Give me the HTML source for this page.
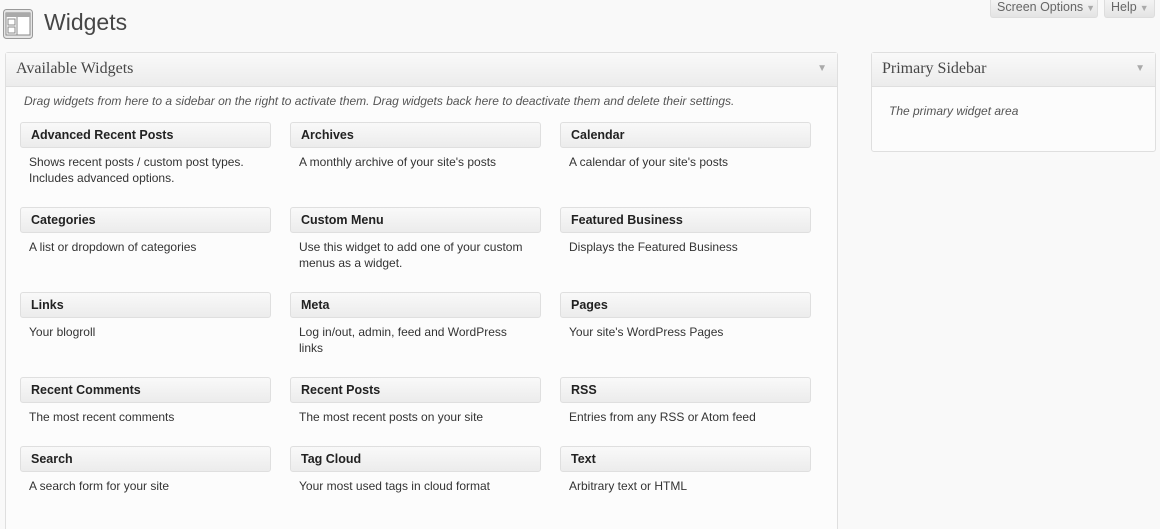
<!DOCTYPE html>
<html><head><style>
html,body{margin:0;width:1160px;height:529px;overflow:hidden}
body{background:#f9f9f9;font-family:"Liberation Sans",sans-serif;color:#333;position:relative}
.abs{position:absolute}
.btn{position:absolute;top:-1px;height:19px;border:1px solid #ddd;border-top:none;border-radius:0 0 3px 3px;background:linear-gradient(#f4f4f4,#e4e4e4);font-size:12.5px;color:#666;line-height:16px;padding:0 6px;box-sizing:border-box;white-space:nowrap}
.btn span{color:#aaa;font-size:9px;margin-left:3px}
.panel{position:absolute;border:1px solid #dfdfdf;border-radius:3px;background:#fcfcfc;box-sizing:border-box}
.ph{height:33px;border-bottom:1px solid #dfdfdf;background:linear-gradient(#f9f9f9,#ececec);font-family:"Liberation Serif",serif;font-size:16px;line-height:32px;padding-left:10px;color:#464646;position:relative}
.ph span{position:absolute;right:10px;top:0;font-family:"Liberation Sans";font-size:10px;color:#aaa}
.w{position:absolute;width:251px}
.wt{height:26px;border:1px solid #dfdfdf;border-radius:3px;background:linear-gradient(#f9f9f9,#ececec);box-sizing:border-box;font-weight:bold;font-size:12.5px;line-height:25px;padding-left:10px;color:#222}
.wd{font-size:12px;line-height:16px;padding:6px 0 0 9px;color:#333}
</style></head><body>
<svg class="abs" style="left:3px;top:9px" width="30" height="30" viewBox="0 0 30 30"><rect x="0.5" y="0.5" width="29" height="29" rx="3" fill="#e6e6e6" stroke="#999"/><rect x="3" y="4" width="24" height="22" fill="#fff" stroke="#888"/><rect x="3" y="4" width="24" height="4" fill="#aaa"/><rect x="5" y="10" width="7" height="6" fill="#fff" stroke="#888"/><rect x="5" y="18" width="7" height="6" fill="#fff" stroke="#888"/><line x1="14" y1="8" x2="14" y2="26" stroke="#888"/></svg>
<div class="abs" style="left:44px;top:9px;font-size:23px;color:#464646">Widgets</div>
<div class="btn" style="left:990px;width:108px">Screen Options<span>▼</span></div>
<div class="btn" style="left:1104px;width:51px">Help<span>▼</span></div>
<div class="panel" style="left:5px;top:52px;width:833px;height:500px">
<div class="ph">Available Widgets<span>▼</span></div>
<div class="abs" style="left:18px;top:41px;font-size:12px;font-style:italic;color:#555;white-space:nowrap">Drag widgets from here to a sidebar on the right to activate them. Drag widgets back here to deactivate them and delete their settings.</div>
</div>
<div class="panel" style="left:871px;top:52px;width:285px;height:100px">
<div class="ph">Primary Sidebar<span>▼</span></div>
<div class="abs" style="left:17px;top:51px;font-size:12px;font-style:italic;color:#555">The primary widget area</div>
</div>
<div class="w" style="left:20px;top:122px"><div class="wt">Advanced Recent Posts</div><div class="wd">Shows recent posts / custom post types.<br>Includes advanced options.</div></div>
<div class="w" style="left:290px;top:122px"><div class="wt">Archives</div><div class="wd">A monthly archive of your site's posts</div></div>
<div class="w" style="left:560px;top:122px"><div class="wt">Calendar</div><div class="wd">A calendar of your site's posts</div></div>
<div class="w" style="left:20px;top:207px"><div class="wt">Categories</div><div class="wd">A list or dropdown of categories</div></div>
<div class="w" style="left:290px;top:207px"><div class="wt">Custom Menu</div><div class="wd">Use this widget to add one of your custom<br>menus as a widget.</div></div>
<div class="w" style="left:560px;top:207px"><div class="wt">Featured Business</div><div class="wd">Displays the Featured Business</div></div>
<div class="w" style="left:20px;top:292px"><div class="wt">Links</div><div class="wd">Your blogroll</div></div>
<div class="w" style="left:290px;top:292px"><div class="wt">Meta</div><div class="wd">Log in/out, admin, feed and WordPress<br>links</div></div>
<div class="w" style="left:560px;top:292px"><div class="wt">Pages</div><div class="wd">Your site's WordPress Pages</div></div>
<div class="w" style="left:20px;top:377px"><div class="wt">Recent Comments</div><div class="wd">The most recent comments</div></div>
<div class="w" style="left:290px;top:377px"><div class="wt">Recent Posts</div><div class="wd">The most recent posts on your site</div></div>
<div class="w" style="left:560px;top:377px"><div class="wt">RSS</div><div class="wd">Entries from any RSS or Atom feed</div></div>
<div class="w" style="left:20px;top:446px"><div class="wt">Search</div><div class="wd">A search form for your site</div></div>
<div class="w" style="left:290px;top:446px"><div class="wt">Tag Cloud</div><div class="wd">Your most used tags in cloud format</div></div>
<div class="w" style="left:560px;top:446px"><div class="wt">Text</div><div class="wd">Arbitrary text or HTML</div></div>
</body></html>
